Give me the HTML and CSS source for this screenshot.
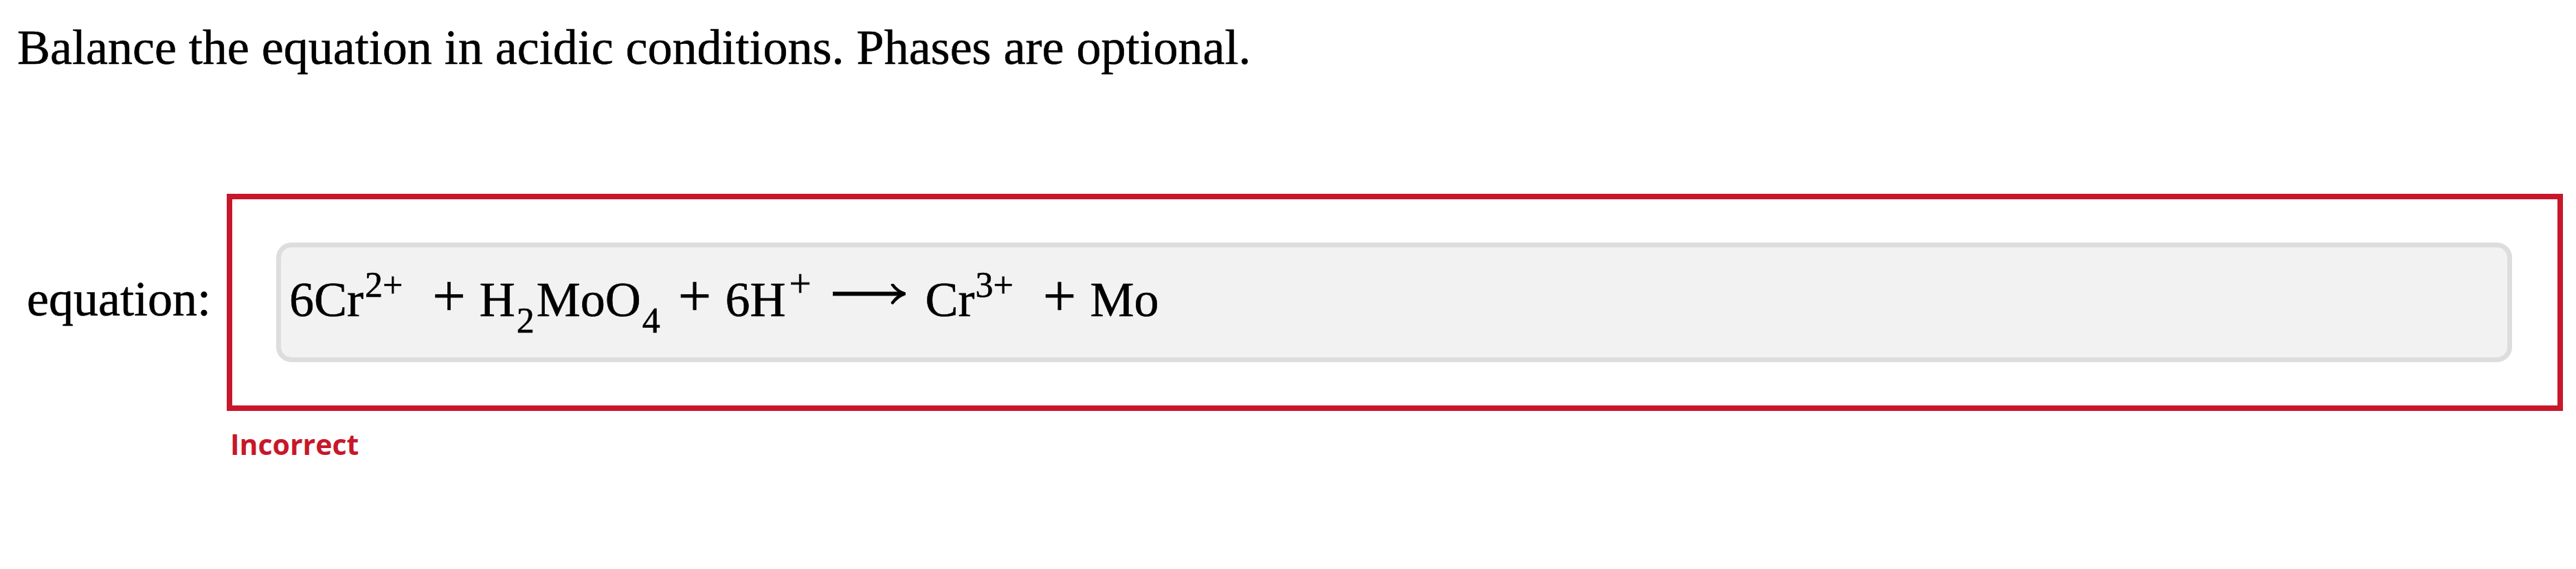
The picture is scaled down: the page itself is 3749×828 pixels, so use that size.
FILE: index.html
```html
<!DOCTYPE html>
<html lang="en">
<head>
<meta charset="utf-8">
<title>Balance the equation</title>
<link rel="stylesheet" href="styles.css">
</head>
<body>
<div class="page">
  <p class="prompt">Balance the equation in acidic conditions. Phases are optional.</p>
  <div class="question">
    <div class="label">equation:</div>
    <div class="field-col">
      <div class="answer-box">
        <div class="eq-input">
          <div class="eq"><span class="t">6Cr</span><span class="sup s1">2+</span><span class="t op o1">+</span><span class="t o2">H</span><span class="sub s2">2</span><span class="t s3">MoO</span><span class="sub s2">4</span><span class="t op o4">+</span><span class="t o2">6H</span><span class="sup s4">+</span><svg class="arrow" width="106" height="30" viewBox="0 0 106 30"><path d="M0 14.5 H102" stroke="#000" stroke-width="6" fill="none"/><path d="M87 1.5 Q94 11 104.5 14.5 Q94 18 87 27.5" stroke="#000" stroke-width="4.5" fill="none" stroke-linecap="round" stroke-linejoin="round"/></svg><span class="t o3">Cr</span><span class="sup s5">3+</span><span class="t op o1">+</span><span class="t o2">Mo</span></div>
        </div>
      </div>
      <div class="feedback">Incorrect</div>
    </div>
  </div>
</div>
</body>
</html>
```

FILE: styles.css
```css
html, body {
  margin: 0;
  padding: 0;
  background: #ffffff;
}

.page {
  padding: 28px 19px 0 25px;
  font-family: "Liberation Serif", "Times New Roman", serif;
  color: #000;
}

.prompt,
.label,
.eq {
  -webkit-text-stroke: 0.6px #000;
}

.prompt {
  margin: 0;
  font-size: 72px;
  line-height: 82px;
}

.question {
  display: flex;
  align-items: flex-start;
  margin-top: 172px;
}

.label {
  flex: 0 0 291px;
  padding-left: 14px;
  padding-top: 112px;
  font-size: 72px;
  line-height: 82px;
}

.field-col {
  flex: 1 1 auto;
  display: flex;
  flex-direction: column;
}

.answer-box {
  border: 8px solid #c8172a;
  padding: 63px 66px 63px 64px;
  box-sizing: border-box;
  height: 316px;
}

.eq-input {
  box-sizing: border-box;
  height: 174px;
  border: 7px solid #dddddd;
  border-radius: 22px;
  background: #f2f2f2;
  padding: 30px 12px 0 12px;
}

.eq {
  display: flex;
  align-items: baseline;
  font-size: 72px;
  line-height: 82px;
  white-space: nowrap;
}

.t {
  display: inline-block;
}

.op {
  font-size: 86px;
  line-height: 82px;
}

.sup, .sub {
  display: inline-block;
  font-size: 52px;
  line-height: 0;
}

.sup {
  position: relative;
  top: -28px;
}

.sub {
  position: relative;
  top: 24px;
}

.s1 { margin-left: 2px; }
.s2 { margin-left: 2px; }
.s3 { margin-left: 3px; }
.s4 { margin-left: 5px; font-size: 57px; }
.s5 { margin-left: 1px; }

.o1 { margin-left: 43px; }
.o2 { margin-left: 20px; }
.o3 { margin-left: 29px; }
.o4 { margin-left: 26px; }

.arrow {
  margin-left: 31px;
  align-self: center;
  position: relative;
  top: -6px;
}

.feedback {
  margin-top: 19px;
  padding-left: 5px;
  font-family: "Open Sans", "Liberation Sans", sans-serif;
  font-weight: 700;
  font-size: 41px;
  line-height: 58px;
  color: #c8172a;
}
```
